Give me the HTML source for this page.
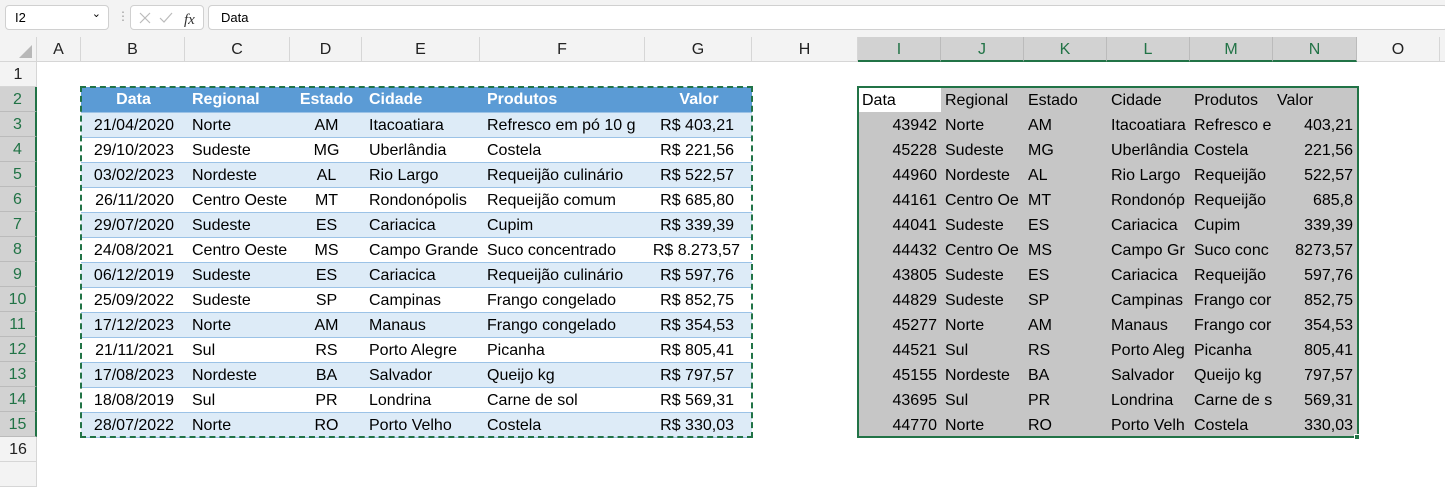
<!DOCTYPE html>
<html><head><meta charset="utf-8"><style>
*{margin:0;padding:0;box-sizing:border-box}
body{width:1445px;height:468px;background:#fff;font-family:"Liberation Sans",sans-serif;position:relative;overflow:hidden;color:#000}
.abs{position:absolute}
.top{left:0;top:0;width:1445px;height:37px;background:#f3f3f3}
.nb{left:5px;top:5px;width:104px;height:25px;background:#fff;border:1px solid #d0d0d0;border-radius:4px;font-size:13px;padding:4px 0 0 9px}
.fb{left:130px;top:5px;width:74px;height:25px;background:#fff;border:1px solid #d0d0d0;border-radius:4px}
.fi{left:208px;top:5px;width:1240px;height:25px;background:#fff;border:1px solid #d0d0d0;border-radius:4px;font-size:13px;padding:4px 0 0 12px}
.ch{top:37px;height:25px;background:#f3f3f3;border-right:1px solid #d6d6d6;border-bottom:1px solid #d6d6d6;font-size:16px;text-align:center;line-height:25px;color:#222}
.ch.sel{background:#d2d2d2;color:#217346;border-bottom:2px solid #217346;border-right:1px solid #bbb}
.rh{left:0;width:37px;height:25px;background:#f3f3f3;border-right:1px solid #d6d6d6;border-bottom:1px solid #d6d6d6;font-size:16px;text-align:center;line-height:25px;color:#222}
.rh.sel{background:#d2d2d2;color:#217346;border-right:2px solid #217346;border-bottom:1px solid #bbb}
table{position:absolute;border-collapse:collapse;table-layout:fixed;font-size:16px}
td{height:25px;padding:2px 6px 0 6px;white-space:nowrap;overflow:hidden}
.L td{padding-left:7px}
.L td:first-child{padding-right:11px}
.L td:last-child{padding-right:18px}
.L tr.h td{background:#5b9bd5;color:#fff;font-weight:bold}
.L tr.h td:first-child,.L tr.h td:last-child{padding-right:6px}
.L tr:nth-child(even) td{background:#ddebf7}
.L tr td{border-bottom:1px solid #9bc2e6}
.r{text-align:right}.c{text-align:center}
.R td{background:#c6c6c6;padding:2px 4px 0 4px}
</style></head><body>
<div class="abs top"></div>
<div class="abs nb">I2<span style="position:absolute;right:7px;top:1px;font-size:11px">&#8964;</span></div>
<div class="abs" style="left:117px;top:9px;color:#999;font-size:12px">&#8942;</div>
<div class="abs fb"><svg width="74" height="25" style="position:absolute;left:0;top:0"><path d="M9 7l10 10M19 7L9 17" stroke="#bbb" stroke-width="1.2" fill="none"/><path d="M29 12l4 4 8-9" stroke="#bbb" stroke-width="1.2" fill="none"/><text x="53" y="18" font-family="Liberation Serif" font-style="italic" font-size="15" fill="#333">fx</text></svg></div>
<div class="abs fi">Data</div>
<div class="abs" style="left:0;top:37px;width:37px;height:25px;background:#f3f3f3;border-right:1px solid #d6d6d6;border-bottom:1px solid #d6d6d6"><svg width="36" height="24"><path d="M32 8L32 21L19 21Z" fill="#b8b8b8"/></svg></div>
<div class="abs ch" style="left:37px;width:44px">A</div>
<div class="abs ch" style="left:81px;width:104px">B</div>
<div class="abs ch" style="left:185px;width:105px">C</div>
<div class="abs ch" style="left:290px;width:72px">D</div>
<div class="abs ch" style="left:362px;width:118px">E</div>
<div class="abs ch" style="left:480px;width:165px">F</div>
<div class="abs ch" style="left:645px;width:107px">G</div>
<div class="abs ch" style="left:752px;width:106px">H</div>
<div class="abs ch sel" style="left:858px;width:83px">I</div>
<div class="abs ch sel" style="left:941px;width:83px">J</div>
<div class="abs ch sel" style="left:1024px;width:83px">K</div>
<div class="abs ch sel" style="left:1107px;width:83px">L</div>
<div class="abs ch sel" style="left:1190px;width:83px">M</div>
<div class="abs ch sel" style="left:1273px;width:84px">N</div>
<div class="abs ch" style="left:1357px;width:83px">O</div>
<div class="abs ch" style="left:1440px;width:10px"></div>
<div class="abs rh" style="top:62px">1</div>
<div class="abs rh sel" style="top:87px">2</div>
<div class="abs rh sel" style="top:112px">3</div>
<div class="abs rh sel" style="top:137px">4</div>
<div class="abs rh sel" style="top:162px">5</div>
<div class="abs rh sel" style="top:187px">6</div>
<div class="abs rh sel" style="top:212px">7</div>
<div class="abs rh sel" style="top:237px">8</div>
<div class="abs rh sel" style="top:262px">9</div>
<div class="abs rh sel" style="top:287px">10</div>
<div class="abs rh sel" style="top:312px">11</div>
<div class="abs rh sel" style="top:337px">12</div>
<div class="abs rh sel" style="top:362px">13</div>
<div class="abs rh sel" style="top:387px">14</div>
<div class="abs rh sel" style="top:412px">15</div>
<div class="abs rh" style="top:437px">16</div>
<div class="abs rh" style="top:462px"></div>

<table class="L" style="left:81px;top:87px;width:671px">
<colgroup><col style="width:104px"><col style="width:105px"><col style="width:72px"><col style="width:118px"><col style="width:165px"><col style="width:107px"></colgroup>
<tr class="h"><td class="c">Data</td><td>Regional</td><td class="c">Estado</td><td>Cidade</td><td>Produtos</td><td class="c">Valor</td></tr>
<tr><td class="r">21/04/2020</td><td>Norte</td><td class="c">AM</td><td>Itacoatiara</td><td>Refresco em pó 10 g</td><td class="r">R$ 403,21</td></tr>
<tr><td class="r">29/10/2023</td><td>Sudeste</td><td class="c">MG</td><td>Uberlândia</td><td>Costela</td><td class="r">R$ 221,56</td></tr>
<tr><td class="r">03/02/2023</td><td>Nordeste</td><td class="c">AL</td><td>Rio Largo</td><td>Requeijão culinário</td><td class="r">R$ 522,57</td></tr>
<tr><td class="r">26/11/2020</td><td>Centro Oeste</td><td class="c">MT</td><td>Rondonópolis</td><td>Requeijão comum</td><td class="r">R$ 685,80</td></tr>
<tr><td class="r">29/07/2020</td><td>Sudeste</td><td class="c">ES</td><td>Cariacica</td><td>Cupim</td><td class="r">R$ 339,39</td></tr>
<tr><td class="r">24/08/2021</td><td>Centro Oeste</td><td class="c">MS</td><td>Campo Grande</td><td>Suco concentrado</td><td class="r" style="padding-right:12px">R$ 8.273,57</td></tr>
<tr><td class="r">06/12/2019</td><td>Sudeste</td><td class="c">ES</td><td>Cariacica</td><td>Requeijão culinário</td><td class="r">R$ 597,76</td></tr>
<tr><td class="r">25/09/2022</td><td>Sudeste</td><td class="c">SP</td><td>Campinas</td><td>Frango congelado</td><td class="r">R$ 852,75</td></tr>
<tr><td class="r">17/12/2023</td><td>Norte</td><td class="c">AM</td><td>Manaus</td><td>Frango congelado</td><td class="r">R$ 354,53</td></tr>
<tr><td class="r">21/11/2021</td><td>Sul</td><td class="c">RS</td><td>Porto Alegre</td><td>Picanha</td><td class="r">R$ 805,41</td></tr>
<tr><td class="r">17/08/2023</td><td>Nordeste</td><td class="c">BA</td><td>Salvador</td><td>Queijo kg</td><td class="r">R$ 797,57</td></tr>
<tr><td class="r">18/08/2019</td><td>Sul</td><td class="c">PR</td><td>Londrina</td><td>Carne de sol</td><td class="r">R$ 569,31</td></tr>
<tr><td class="r">28/07/2022</td><td>Norte</td><td class="c">RO</td><td>Porto Velho</td><td>Costela</td><td class="r">R$ 330,03</td></tr>
</table>
<div class="abs" style="left:80px;top:86px;width:673px;height:352px;border:2px dashed #217346"></div>

<table class="R" style="left:858px;top:87px;width:499px">
<colgroup><col style="width:83px"><col style="width:83px"><col style="width:83px"><col style="width:83px"><col style="width:83px"><col style="width:84px"></colgroup>
<tr><td style="background:#fff">Data</td><td>Regional</td><td>Estado</td><td>Cidade</td><td>Produtos</td><td>Valor</td></tr>
<tr><td class="r">43942</td><td>Norte</td><td>AM</td><td style="padding-right:0">Itacoatiara</td><td>Refresco e</td><td class="r">403,21</td></tr>
<tr><td class="r">45228</td><td>Sudeste</td><td>MG</td><td style="padding-right:0">Uberlândia</td><td>Costela</td><td class="r">221,56</td></tr>
<tr><td class="r">44960</td><td>Nordeste</td><td>AL</td><td>Rio Largo</td><td style="padding-right:0">Requeijão</td><td class="r">522,57</td></tr>
<tr><td class="r">44161</td><td style="padding-right:0">Centro Oe</td><td>MT</td><td style="padding-right:0">Rondonóp</td><td style="padding-right:0">Requeijão</td><td class="r">685,8</td></tr>
<tr><td class="r">44041</td><td>Sudeste</td><td>ES</td><td>Cariacica</td><td>Cupim</td><td class="r">339,39</td></tr>
<tr><td class="r">44432</td><td style="padding-right:0">Centro Oe</td><td>MS</td><td style="padding-right:0">Campo Gr</td><td style="padding-right:0">Suco conc</td><td class="r">8273,57</td></tr>
<tr><td class="r">43805</td><td>Sudeste</td><td>ES</td><td>Cariacica</td><td style="padding-right:0">Requeijão</td><td class="r">597,76</td></tr>
<tr><td class="r">44829</td><td>Sudeste</td><td>SP</td><td>Campinas</td><td style="padding-right:0">Frango cor</td><td class="r">852,75</td></tr>
<tr><td class="r">45277</td><td>Norte</td><td>AM</td><td>Manaus</td><td style="padding-right:0">Frango cor</td><td class="r">354,53</td></tr>
<tr><td class="r">44521</td><td>Sul</td><td>RS</td><td style="padding-right:0">Porto Aleg</td><td>Picanha</td><td class="r">805,41</td></tr>
<tr><td class="r">45155</td><td>Nordeste</td><td>BA</td><td>Salvador</td><td>Queijo kg</td><td class="r">797,57</td></tr>
<tr><td class="r">43695</td><td>Sul</td><td>PR</td><td>Londrina</td><td style="padding-right:0">Carne de s</td><td class="r">569,31</td></tr>
<tr><td class="r">44770</td><td>Norte</td><td>RO</td><td style="padding-right:0">Porto Velh</td><td>Costela</td><td class="r">330,03</td></tr>
</table>
<div class="abs" style="left:857px;top:86px;width:502px;height:352px;border:2px solid #217346"></div>
<div class="abs" style="left:1354px;top:434px;width:6px;height:6px;background:#217346;border:1px solid #fff"></div>
</body></html>
